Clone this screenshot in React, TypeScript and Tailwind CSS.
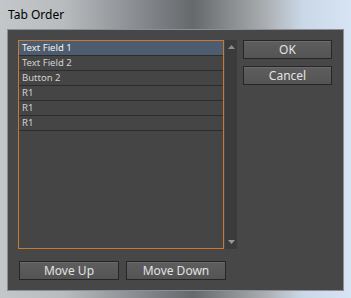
import React from "react";

const rows = ["Text Field 1", "Text Field 2", "Button 2", "R1", "R1", "R1"];

function DlgButton({ label, className = "" }: { label: string; className?: string }) {
  return (
    <button
      className={`h-[19px] border border-[#262626] bg-[linear-gradient(180deg,#5e5e5e_0%,#545454_100%)] text-[12px] leading-none text-[#e2e2e2] shadow-[inset_0_1px_0_#6a6a6a] ${className}`}
    >
      {label}
    </button>
  );
}

export default function App() {
  return (
    <div
      className="flex h-[298px] w-[351px] flex-col bg-[linear-gradient(90deg,#c4c7ca_0%,#b9bcbf_18%,#7b7e82_45%,#66696c_55%,#a9acaf_75%,#c9d7e6_86%,#d6e4f3_100%)]"
      style={{ fontFamily: '"Noto Sans", "Open Sans", sans-serif' }}
    >
      {/* title bar */}
      <div className="flex h-[29px] items-center pl-[8px] text-[12px] text-black">Tab Order</div>

      {/* client area */}
      <div className="mx-[7px] mb-[7px] flex flex-1 gap-[6px] border border-[#8a9096] bg-[#474747] px-[10px] pb-[10px] pt-[10px]">
        {/* left column */}
        <div className="flex w-[219px] flex-col">
          <div className="flex h-[209px]">
            <div className="flex-1 border border-[#c67a34] bg-[#454545]">
              {rows.map((r, i) => (
                <div
                  key={i}
                  className={`flex h-[15px] items-center border-b border-[#2c2c2c] pl-[3px] text-[9.5px] leading-none ${
                    i === 0 ? "bg-[#4d5c6e] text-[#f2f2f2]" : "text-[#d2d2d2]"
                  }`}
                >
                  {r}
                </div>
              ))}
            </div>
            <div className="ml-[1px] flex w-[12px] flex-col items-center justify-between bg-[#3b3b3b] py-[5px]">
              <svg width="7" height="4" viewBox="0 0 7 4">
                <polygon points="0,4 7,4 3.5,0" fill="#8c8c8c" />
              </svg>
              <svg width="7" height="4" viewBox="0 0 7 4">
                <polygon points="0,0 7,0 3.5,4" fill="#9a9a9a" />
              </svg>
            </div>
          </div>
          <div className="mt-[12px] flex gap-[7px] pl-[1px]">
            <DlgButton label="Move Up" className="w-[100px]" />
            <DlgButton label="Move Down" className="w-[100px]" />
          </div>
        </div>

        {/* right column */}
        <div className="flex w-[89px] flex-col gap-[7px]">
          <DlgButton label="OK" className="w-full" />
          <DlgButton label="Cancel" className="w-full" />
        </div>
      </div>
    </div>
  );
}
